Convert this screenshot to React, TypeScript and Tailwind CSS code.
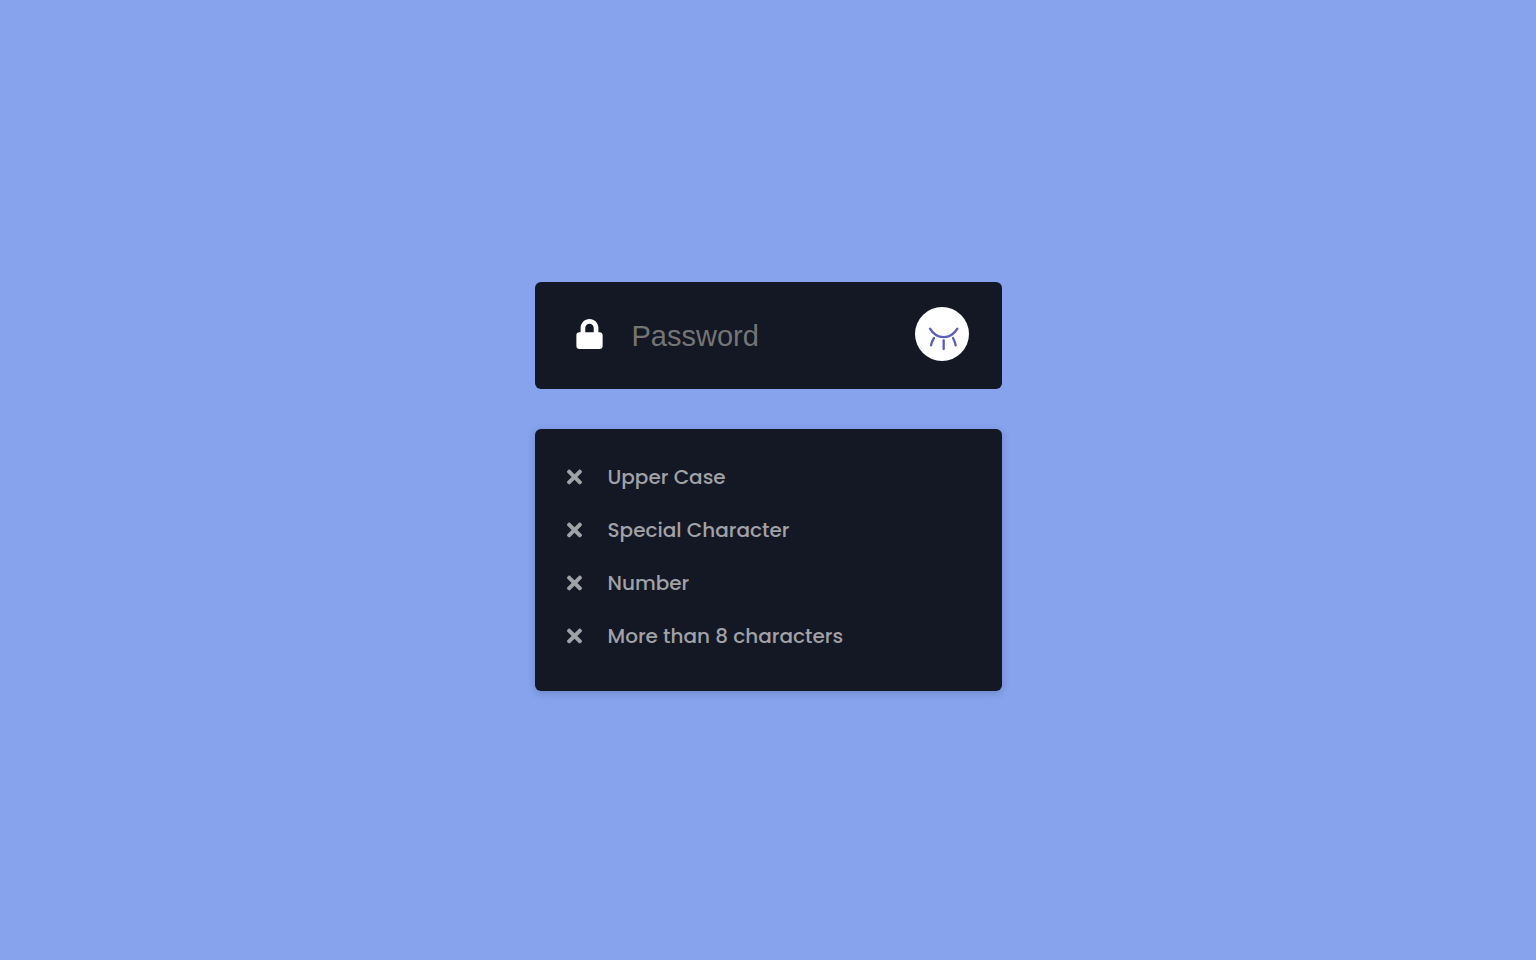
import { useState } from "react";
import { FaLock, FaTimes, FaCheck } from "react-icons/fa";

const rules = [
  { label: "Upper Case", test: (v: string) => /[A-Z]/.test(v) },
  { label: "Special Character", test: (v: string) => /[^A-Za-z0-9\s]/.test(v) },
  { label: "Number", test: (v: string) => /\d/.test(v) },
  { label: "More than 8 characters", test: (v: string) => v.length > 8 },
];

function ClosedEye() {
  return (
    <svg
      viewBox="0 0 162 162"
      className="size-full"
      fill="none"
      stroke="#5c5ebe"
      strokeWidth="7"
      strokeLinecap="round"
      aria-hidden="true"
    >
      <path d="M45 65C65 99 107 99 127 65" />
      <path d="M57 93Q51 102 48 115" />
      <path d="M86 100V126" />
      <path d="M114 93Q119 102 122 115" />
    </svg>
  );
}

export default function App() {
  const [password, setPassword] = useState("");
  const [visible, setVisible] = useState(false);

  return (
    <main className="flex min-h-screen flex-col items-center justify-center bg-[#87a3ee] px-4 pt-[13px] font-['Poppins','Inter',sans-serif]">
      <div className="flex w-full max-w-[467px] flex-col gap-10">
        <div className="flex items-center rounded-md bg-[#141724] pt-[25px] pr-[33px] pb-7 pl-[41px]">
          <FaLock className="mr-[27px] h-[30px] w-[27px] shrink-0 text-white" aria-hidden="true" />
          <input
            type={visible ? "text" : "password"}
            aria-label="Password"
            placeholder="Password"
            value={password}
            onChange={(e) => setPassword(e.target.value)}
            className="min-w-0 flex-1 bg-transparent pt-1 pl-0.5 font-['Liberation_Sans',Arial,sans-serif] text-[29px] leading-9 text-white outline-none placeholder:text-[#757575]"
          />
          <button
            type="button"
            aria-label="Toggle password visibility"
            aria-pressed={visible}
            onClick={() => setVisible(!visible)}
            className="size-[54px] shrink-0 cursor-pointer rounded-full bg-white"
          >
            <ClosedEye />
          </button>
        </div>
        <ul className="flex flex-col gap-[21px] rounded-md bg-[#141724] px-8 pt-8 pb-[39px] shadow-[0_2px_8px_rgba(20,23,36,0.2)]">
          {rules.map((rule) => {
            const passed = rule.test(password);
            const Icon = passed ? FaCheck : FaTimes;
            return (
              <li
                key={rule.label}
                className={`flex items-center gap-[26px] text-xl leading-8 font-medium ${passed ? "text-white" : "text-[#a1a2a7]"}`}
              >
                <Icon className="h-[22px] w-[15px] shrink-0" aria-hidden="true" />
                {rule.label}
              </li>
            );
          })}
        </ul>
      </div>
    </main>
  );
}
